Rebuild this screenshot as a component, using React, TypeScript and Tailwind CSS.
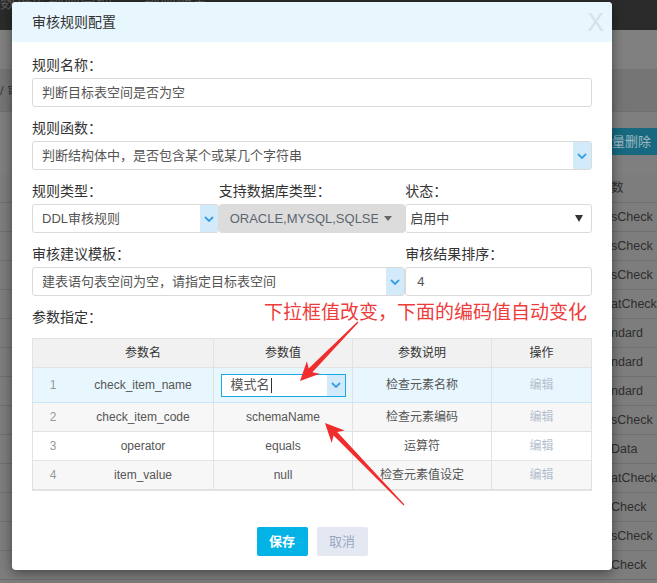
import React from "react";

// dimmed page rows that peek out on the right of the dialog
const bgRows = [
  "数",
  "sCheck",
  "sCheck",
  "sCheck",
  "atCheck",
  "ndard",
  "ndard",
  "ndard",
  "sCheck",
  "Data",
  "atCheck",
  "Check",
  "sCheck",
  "Check",
];

const params = [
  { idx: 1, name: "check_item_name", value: "", desc: "检查元素名称" },
  { idx: 2, name: "check_item_code", value: "schemaName", desc: "检查元素编码" },
  { idx: 3, name: "operator", value: "equals", desc: "运算符" },
  { idx: 4, name: "item_value", value: "null", desc: "检查元素值设定" },
];

function Chevron() {
  return (
    <svg width="10" height="6" viewBox="0 0 10 6">
      <path d="M1 1l4 4 4-4" fill="none" stroke="#3a9ee4" strokeWidth="1.8" />
    </svg>
  );
}

function ArrowBox() {
  return (
    <div className="flex w-[18px] shrink-0 items-center justify-center bg-[#d3eafb]">
      <Chevron />
    </div>
  );
}

function SelectBox({ text }: { text: string }) {
  return (
    <div className="flex h-[29px] overflow-hidden rounded-[3px] border border-[#dadada] bg-white">
      <div className="flex flex-1 items-center truncate px-[9px] text-[13px] text-[#555]">
        {text}
      </div>
      <ArrowBox />
    </div>
  );
}

function Field({ label, children }: { label: string; children: React.ReactNode }) {
  return (
    <div className="flex flex-col">
      <div className="mb-[3px] h-[20px] text-[14px] leading-[20px] text-[#333]">{label}</div>
      {children}
    </div>
  );
}

// tapered arrow like a screenshot-tool annotation
function arrowPoints(x1: number, y1: number, x2: number, y2: number) {
  const dx = x2 - x1;
  const dy = y2 - y1;
  const len = Math.hypot(dx, dy);
  const ux = dx / len;
  const uy = dy / len;
  const px = -uy;
  const py = ux;
  const head = 19;
  const hw = 9;
  const bx = x2 - ux * head;
  const by = y2 - uy * head;
  const pts = [
    [x1 + px * 0.6, y1 + py * 0.6],
    [bx + ux * 4 + px * 2.6, by + uy * 4 + py * 2.6],
    [bx + px * hw, by + py * hw],
    [x2, y2],
    [bx - px * hw, by - py * hw],
    [bx + ux * 4 - px * 2.6, by + uy * 4 - py * 2.6],
    [x1 - px * 0.6, y1 - py * 0.6],
  ];
  return pts.map((p) => p.join(",")).join(" ");
}

export default function App() {
  return (
    <div className="relative h-[583px] w-[657px] overflow-hidden bg-[#7d7d7d] font-['Liberation_Sans','Noto_Sans_CJK_SC',sans-serif]">
      {/* PAGE BEHIND THE DIALOG */}
      <div className="h-[30px] overflow-hidden bg-[#2b2b2b]">
        <div className="-mt-[9px] text-[16px] text-[#5c5c5c]">数据库规则管理　　规则配置</div>
      </div>
      <div className="h-[40px] border-b border-[#737373] bg-[#808080]" />
      <div className="flex h-[42px] items-center border-b border-[#6f6f6f] bg-[#757575] text-[13px] text-[#3a3a3a]">
        / 审
      </div>
      <div className="flex h-[62px] justify-end bg-[#7f7f7f] pt-[16px]">
        <div className="flex h-[27px] w-[70px] items-center bg-[#16697f] pl-[12px] text-[13px] text-[#9fb9c2]">
          批量删除
        </div>
      </div>
      {bgRows.map((t, i) => (
        <div
          key={i}
          className="flex h-[29px] items-center border-b border-[#6f6f6f] bg-[#7d7d7d] text-[12.5px] text-[#2e2e2e]"
        >
          <div className="w-[611px] shrink-0" />
          <div className="whitespace-nowrap">{t}</div>
        </div>
      ))}

      {/* DIALOG */}
      <div className="absolute left-[12px] top-[2px] w-[600px] overflow-hidden rounded-[4px] bg-white shadow-[0_3px_12px_rgba(0,0,0,0.45)]">
        <div className="flex h-[40px] items-center justify-between bg-[#e8f6fe] pl-[20px] pr-[8px]">
          <div className="text-[14px] text-[#333]">审核规则配置</div>
          <div className="text-[25px] leading-none text-[#d6e2ea]">X</div>
        </div>

        <div className="px-[20px] pb-[14px] pt-[13px]">
          <Field label="规则名称：">
            <div className="flex h-[29px] items-center rounded-[3px] border border-[#dadada] px-[9px] text-[13px] text-[#555]">
              判断目标表空间是否为空
            </div>
          </Field>

          <div className="mt-[11px]">
            <Field label="规则函数：">
              <SelectBox text="判断结构体中，是否包含某个或某几个字符串" />
            </Field>
          </div>

          <div className="mt-[11px] grid grid-cols-3">
            <Field label="规则类型：">
              <SelectBox text="DDL审核规则" />
            </Field>
            <Field label="支持数据库类型：">
              <div className="flex h-[29px] items-center rounded-[3px] bg-[#dcdcdc] pl-[11px] pr-[11px] text-[13px] text-[#5c6670]">
                <div className="w-[148px] overflow-hidden whitespace-nowrap">ORACLE,MYSQL,SQLSERVER</div>
                <svg className="ml-[6px]" width="8" height="5" viewBox="0 0 8 5">
                  <path d="M0 0h8L4 5z" fill="#666" />
                </svg>
              </div>
            </Field>
            <Field label="状态：">
              <div className="flex h-[29px] items-center justify-between rounded-[3px] border border-[#dadada] pl-[4px] pr-[8px] text-[13px] text-[#444]">
                <span>启用中</span>
                <svg width="8" height="7" viewBox="0 0 8 7">
                  <path d="M0 0h8L4 7z" fill="#333" />
                </svg>
              </div>
            </Field>
          </div>

          <div className="mt-[11px] grid grid-cols-3">
            <div className="col-span-2">
              <Field label="审核建议模板：">
                <SelectBox text="建表语句表空间为空，请指定目标表空间" />
              </Field>
            </div>
            <Field label="审核结果排序：">
              <div className="flex h-[29px] items-center rounded-[3px] border border-[#dadada] px-[11px] text-[13px] text-[#555]">
                4
              </div>
            </Field>
          </div>

          <div className="mt-[11px] h-[20px] text-[14px] leading-[20px] text-[#333]">参数指定：</div>

          {/* PARAMS TABLE */}
          <div className="mt-[11px] border border-[#e2e2e2] text-[12px]">
            <div className="flex h-[29px] items-center border-b border-[#e2e2e2] bg-[#f1f1f1] text-[#333]">
              <div className="w-[180px] pl-[40px] text-center">参数名</div>
              <div className="flex h-full w-[139px] items-center justify-center border-l border-[#e2e2e2]">参数值</div>
              <div className="flex h-full w-[139px] items-center justify-center border-l border-[#e2e2e2]">参数说明</div>
              <div className="flex h-full flex-1 items-center justify-center border-l border-[#e2e2e2]">操作</div>
            </div>
            {params.map((p) => (
              <div
                key={p.idx}
                className={
                  p.idx === 1
                    ? "flex h-[35px] items-center border-b border-[#c9e7f8] bg-[#e8f6fe] text-[#555]"
                    : p.idx % 2 === 0
                    ? "flex h-[29px] items-center border-b border-[#e2e2e2] bg-[#f7f7f7] text-[#555]"
                    : "flex h-[29px] items-center border-b border-[#e2e2e2] bg-white text-[#555]"
                }
              >
                <div className="w-[40px] text-center text-[#999]">{p.idx}</div>
                <div className="w-[140px] text-center">{p.name}</div>
                <div className="flex h-full w-[139px] items-center justify-center border-l border-[#e2e2e2]">
                  {p.idx === 1 ? (
                    <div className="flex h-[23px] w-[125px] overflow-hidden border-[1.5px] border-[#1ba9e6] bg-white">
                      <div className="flex flex-1 items-center pl-[9px] text-[13px] text-[#555]">
                        模式名
                        <span className="ml-[1px] h-[15px] w-[1px] bg-[#333]" />
                      </div>
                      <ArrowBox />
                    </div>
                  ) : (
                    p.value
                  )}
                </div>
                <div className="flex h-full w-[139px] items-center justify-center border-l border-[#e2e2e2]">{p.desc}</div>
                <div className="flex h-full flex-1 items-center justify-center border-l border-[#e2e2e2] text-[#b4bfce]">
                  编辑
                </div>
              </div>
            ))}
          </div>

          <div className="mt-[36px] flex justify-center gap-[9px]">
            <button className="h-[29px] w-[51px] rounded-[2px] bg-[#04b3e6] text-[13px] font-bold text-white">保存</button>
            <button className="h-[29px] w-[51px] rounded-[2px] bg-[#e4e8f3] text-[13px] text-[#97a8be]">取消</button>
          </div>
        </div>

        {/* ANNOTATION */}
        <div className="absolute left-[252px] top-[300px] text-[19px] leading-[22px] text-[#ee3b3b]">
          下拉框值改变，下面的编码值自动变化
        </div>
      </div>

      <svg className="pointer-events-none absolute left-0 top-0" width="657" height="583">
        <polygon points={arrowPoints(358, 322, 300, 381)} fill="#f02c2c" />
        <polygon points={arrowPoints(404, 505, 325, 423)} fill="#f02c2c" />
      </svg>
    </div>
  );
}
